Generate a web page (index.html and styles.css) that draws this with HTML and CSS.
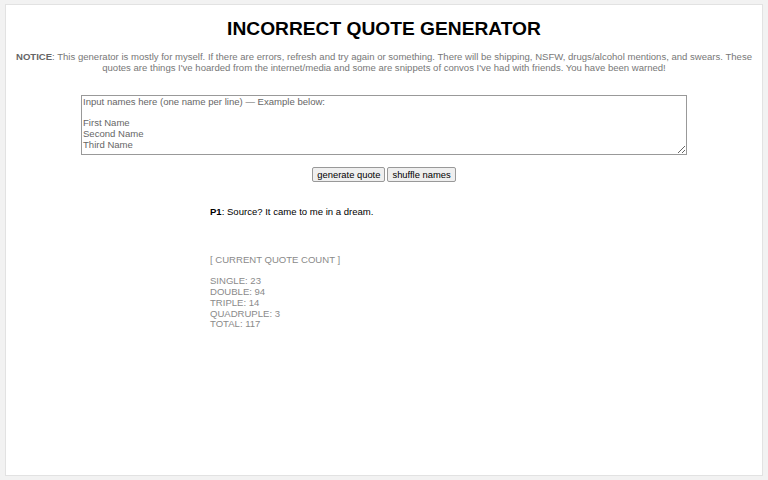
FILE: index.html
```html
<!DOCTYPE html>
<html lang="en">
<head>
    <meta charset="UTF-8">
    <meta name="viewport" content="width=device-width, initial-scale=1.0">
    <title>Incorrect Quote Generator</title>
    <link rel="stylesheet" href="styles.css">
</head>
<body>
    <div class="wrap">
        <h1>INCORRECT QUOTE GENERATOR</h1>
        <p class="notice"><b>NOTICE</b>: This generator is mostly for myself. If there are errors, refresh and try again or something. There will be shipping, NSFW, drugs/alcohol mentions, and swears. These quotes are things I've hoarded from the internet/media and some are snippets of convos I've had with friends. You have been warned!</p>

        <textarea id="names">Input names here (one name per line) — Example below:

First Name
Second Name
Third Name</textarea>

        <div class="buttons">
            <button id="generateButton">generate quote</button>
            <button id="shuffleButton">shuffle names</button>
        </div>

        <div class="output">
            <p id="quote"><b>P1</b>: Source? It came to me in a dream.</p>

            <div class="count">
                <p>[ CURRENT QUOTE COUNT ]</p>
                <p>SINGLE: 23<br>DOUBLE: 94<br>TRIPLE: 14<br>QUADRUPLE: 3<br>TOTAL: 117</p>
            </div>
        </div>
    </div>
</body>
</html>
```

FILE: styles.css
```css
body {
    font-family: "Liberation Sans", Arial, sans-serif;
    background-color: #f2f2f2;
    margin: 0;
    padding: 4px 5px 5px 5px;
}
.wrap {
    background-color: #fff;
    border: 1px solid #e2e2e2;
    height: 470px;
    text-align: center;
}
h1 {
    font-size: 19.2px;
    margin: 13px 0 0 0;
    color: #000;
}
.notice {
    font-size: 9.55px;
    line-height: 11px;
    color: #777;
    margin: 11px 10px 0 10px;
}
.notice b {
    color: #666;
}
#names {
    display: block;
    width: 606px;
    height: 60px;
    margin: 22px auto 0 auto;
    box-sizing: border-box;
    padding: 1px 1px;
    font-family: "Liberation Sans", Arial, sans-serif;
    font-size: 9.55px;
    line-height: 10.7px;
    color: #666;
    border: 1px solid #999;
    resize: vertical;
}
.buttons {
    margin-top: 12px;
    display: flex;
    justify-content: center;
    gap: 2px;
}
button {
    font-family: "Liberation Sans", Arial, sans-serif;
    font-size: 9.4px;
    padding: 1px 4px;
    height: 15px;
    background-color: #efefef;
    border: 1px solid #999;
    border-radius: 2px;
    color: #000;
}
.output {
    width: 348px;
    margin: 0 auto;
    text-align: left;
    font-size: 9.55px;
    line-height: 10.7px;
}
#quote {
    margin: 25px 0 0 0;
}
.count {
    color: #8a8a8a;
    margin-top: 37px;
}
.count p {
    margin: 0 0 11px 0;
}
```
